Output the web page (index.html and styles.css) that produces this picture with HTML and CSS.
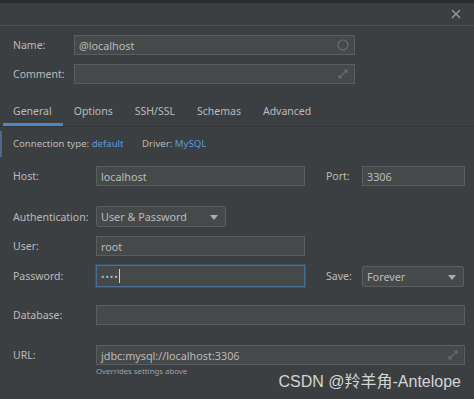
FILE: index.html
```html
<!DOCTYPE html>
<html lang="en">
<head>
    <meta charset="UTF-8">
    <title>Data Source</title>
    <link rel="stylesheet" href="styles.css">
</head>
<body>
    <div class="dialog">
        <div class="topstrip"></div>
        <div class="titlebar">
            <span class="close">
                <svg width="10" height="10" viewBox="0 0 10 10"><path d="M1 1L9 9M9 1L1 9" stroke="#9a9c9e" stroke-width="1.4"/></svg>
            </span>
        </div>

        <div class="top-fields">
            <div class="row name-row">
                <label class="lbl short">Name:</label>
                <div class="input wide">@localhost
                    <svg class="icon" width="12" height="12" viewBox="0 0 12 12"><circle cx="6" cy="6" r="5" fill="none" stroke="#6b6d6f" stroke-width="1.2"/></svg>
                </div>
            </div>
            <div class="row comment-row">
                <label class="lbl short">Comment:</label>
                <div class="input wide">
                    <svg class="icon" width="12" height="12" viewBox="0 0 12 12"><path d="M2 10L10 2M7 2h3v3M2 7v3h3" fill="none" stroke="#6b6d6f" stroke-width="1.1"/></svg>
                </div>
            </div>
        </div>

        <div class="tabs">
            <span class="tab active">General</span>
            <span class="tab">Options</span>
            <span class="tab">SSH/SSL</span>
            <span class="tab">Schemas</span>
            <span class="tab">Advanced</span>
        </div>

        <div class="general">
            <div class="conn">
                Connection type: <span class="link">default</span>
                <span class="driver">Driver: <span class="link">MySQL</span></span>
            </div>

            <div class="row host-row">
                <label class="lbl">Host:</label>
                <div class="input mid">localhost</div>
                <label class="lbl side">Port:</label>
                <div class="input small">3306</div>
            </div>

            <div class="row auth-row">
                <label class="lbl">Authentication:</label>
                <div class="select auth">User &amp; Password <span class="caret"></span></div>
            </div>

            <div class="row user-row">
                <label class="lbl">User:</label>
                <div class="input mid">root</div>
            </div>

            <div class="row pass-row">
                <label class="lbl">Password:</label>
                <div class="input mid focus"><span class="dots">••••</span><span class="cursor"></span></div>
                <label class="lbl side">Save:</label>
                <div class="select save">Forever <span class="caret"></span></div>
            </div>

            <div class="row db-row">
                <label class="lbl">Database:</label>
                <div class="input full"></div>
            </div>

            <div class="row url-row">
                <label class="lbl">URL:</label>
                <div class="input full">jdbc:mysql://localhost:3306
                    <svg class="icon" width="12" height="12" viewBox="0 0 12 12"><path d="M2 10L10 2M7 2h3v3M2 7v3h3" fill="none" stroke="#6b6d6f" stroke-width="1.1"/></svg>
                </div>
            </div>
            <div class="hint">Overrides settings above</div>
        </div>

        <div class="watermark">CSDN @羚羊角-Antelope</div>
    </div>
</body>
</html>
```

FILE: styles.css
```css
* {
    margin: 0;
    padding: 0;
    box-sizing: border-box;
}

body {
    background: #3c3f41;
    font-family: "Noto Sans", "Open Sans", sans-serif;
    font-size: 10.5px;
    color: #bbbbbb;
    width: 474px;
    height: 399px;
    overflow: hidden;
}

.dialog {
    position: relative;
    height: 399px;
}

.topstrip {
    height: 3px;
    background: #2b2d2f;
}

.titlebar {
    height: 23px;
    border-bottom: 1px solid #4c5052;
    display: flex;
    justify-content: flex-end;
    align-items: center;
    padding-right: 13px;
}

.close {
    display: flex;
}

.top-fields {
    padding: 9px 0 0 13px;
}

.row {
    display: flex;
    align-items: center;
}

.lbl {
    width: 83px;
    flex-shrink: 0;
}

.lbl.short {
    width: 61px;
}

.lbl.side {
    width: 36px;
    margin-left: 21px;
}

.input, .select {
    height: 20px;
    background: #45494a;
    border: 1px solid #5b5e60;
    padding: 0 4px;
    display: flex;
    align-items: center;
    position: relative;
    font-size: 10.8px;
    color: #bbbbbb;
}

.input.wide {
    width: 281px;
}

.input.mid {
    width: 209px;
}

.input.small {
    width: 103px;
}

.input.full {
    width: 369px;
}

.input.focus {
    height: 22px;
    border: 1px solid #4a6f96;
    box-shadow: 0 0 0 1px #3a536b;
}

.icon {
    position: absolute;
    right: 5px;
    top: 3px;
}

.comment-row {
    margin-top: 9px;
}

.tabs {
    display: flex;
    margin-top: 13px;
    height: 30px;
    border-bottom: 1px solid #333537;
    padding-left: 3px;
}

.tab {
    padding: 1px 11px 0;
    line-height: 27px;
    font-size: 10.5px;
}

.tab.active {
    padding-left: 10px;
    border-bottom: 3px solid #4a88c7;
}

.general {
    padding: 10px 0 0 13px;
    position: relative;
}

.general::before {
    content: "";
    position: absolute;
    left: 0;
    top: 4px;
    width: 2px;
    height: 26px;
    background: #4a6a92;
}

.conn {
    height: 14px;
    line-height: 14px;
    font-size: 9.6px;
}

.link {
    color: #5a9bdc;
}

.driver {
    margin-left: 16px;
}

.host-row {
    margin-top: 15px;
}

.auth-row {
    margin-top: 20px;
}

.select {
    border-radius: 2px;
    height: 21px;
}

.select.auth {
    width: 130px;
}

.select.save {
    width: 102px;
}

.caret {
    position: absolute;
    right: 7px;
    top: 8px;
    border-left: 4px solid transparent;
    border-right: 4px solid transparent;
    border-top: 5px solid #a9abad;
}

.user-row {
    margin-top: 9px;
}

.pass-row {
    margin-top: 9px;
}

.dots {
    font-size: 9px;
    letter-spacing: 1px;
}

.cursor {
    width: 1px;
    height: 14px;
    background: #cfd1d3;
}

.db-row {
    margin-top: 18px;
}

.url-row {
    margin-top: 20px;
}

.hint {
    margin: 1px 0 0 83px;
    font-size: 7.8px;
    color: #a0a2a4;
}

.watermark {
    position: absolute;
    right: 13px;
    bottom: 7px;
    font-family: "Liberation Sans", "Noto Sans CJK SC", sans-serif;
    font-size: 16px;
    color: #d4d5d6;
}
```
